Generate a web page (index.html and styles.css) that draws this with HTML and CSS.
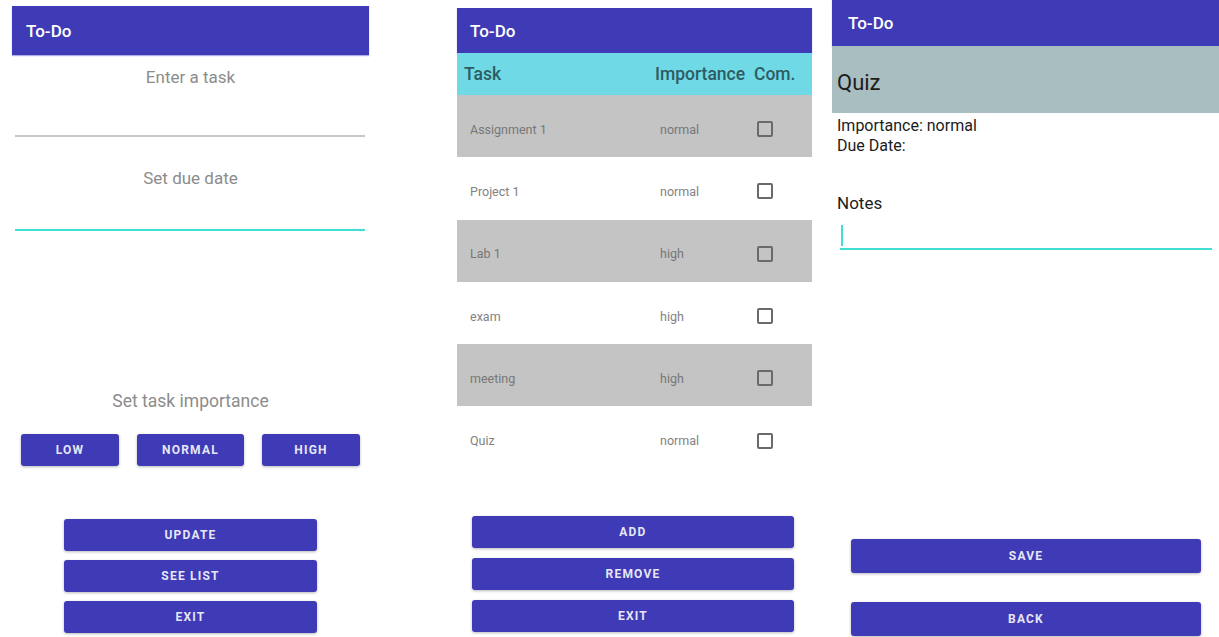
FILE: index.html
```html
<!DOCTYPE html>
<html>
<head>
<meta charset="utf-8">
<link rel="stylesheet" href="styles.css">
</head>
<body>
<div class="screens">
  <section class="screen s1">
    <header class="appbar">To-Do</header>
    <div class="field f-task"><span class="hint">Enter a task</span><div class="line grey"></div></div>
    <div class="field f-date"><span class="hint">Set due date</span><div class="line cyan"></div></div>
    <div class="imp-label">Set task importance</div>
    <div class="imp-row">
      <button class="btn b-low">LOW</button>
      <button class="btn b-normal">NORMAL</button>
      <button class="btn b-high">HIGH</button>
    </div>
    <div class="col-btns">
      <button class="btn wide">UPDATE</button>
      <button class="btn wide">SEE LIST</button>
      <button class="btn wide">EXIT</button>
    </div>
  </section>

  <section class="screen s2">
    <header class="appbar">To-Do</header>
    <div class="thead">
      <span class="c-task">Task</span>
      <span class="c-imp">Importance</span>
      <span class="c-com">Com.</span>
    </div>
    <div class="row alt"><span class="r-task">Assignment 1</span><span class="r-imp">normal</span><span class="cb"></span></div>
    <div class="row"><span class="r-task">Project 1</span><span class="r-imp">normal</span><span class="cb"></span></div>
    <div class="row alt"><span class="r-task">Lab 1</span><span class="r-imp">high</span><span class="cb"></span></div>
    <div class="row"><span class="r-task">exam</span><span class="r-imp">high</span><span class="cb"></span></div>
    <div class="row alt"><span class="r-task">meeting</span><span class="r-imp">high</span><span class="cb"></span></div>
    <div class="row"><span class="r-task">Quiz</span><span class="r-imp">normal</span><span class="cb"></span></div>
    <div class="col-btns2">
      <button class="btn wide2">ADD</button>
      <button class="btn wide2">REMOVE</button>
      <button class="btn wide2">EXIT</button>
    </div>
  </section>

  <section class="screen s3">
    <header class="appbar">To-Do</header>
    <div class="title-band">Quiz</div>
    <div class="info">Importance: normal<br>Due Date:</div>
    <div class="notes-label">Notes</div>
    <div class="notes-input"><span class="cursor"></span></div>
    <button class="btn wide3 save">SAVE</button>
    <button class="btn wide3 back">BACK</button>
  </section>
</div>
</body>
</html>
```
FILE: styles.css
```css
* { box-sizing: border-box; }
html, body { margin: 0; padding: 0; background: #fff; }
body {
  width: 1219px;
  height: 637px;
  overflow: hidden;
  font-family: Roboto, "Liberation Sans", Arial, sans-serif;
}
.screens { display: flex; align-items: flex-start; }
.screen { display: flex; flex-direction: column; }

.appbar {
  background: #3f3ab5;
  color: #fff;
  font-weight: 500;
  font-size: 17px;
  display: flex;
  align-items: center;
  box-shadow: 0 1px 1px rgba(110, 105, 210, 0.55);
}

.btn {
  border: none;
  background: #3f3ab5;
  color: #e6e6f6;
  font-family: Roboto, "Liberation Sans", Arial, sans-serif;
  font-weight: 700;
  font-size: 12px;
  letter-spacing: 1.2px;
  border-radius: 3px;
  box-shadow: 0 1px 3px rgba(0, 0, 0, 0.28);
  padding: 0;
  display: flex;
  align-items: center;
  justify-content: center;
}

/* Screen 1 */
.s1 { width: 357px; margin: 6px 0 0 12px; }
.s1 .appbar { height: 49px; padding-left: 14px; }
.field { display: flex; flex-direction: column; align-items: center; }
.hint { color: #8c8c8c; font-size: 17px; line-height: 20px; }
.f-task { margin-top: 12px; }
.f-task .hint { margin-bottom: 48px; }
.f-date { margin-top: 31px; }
.f-date .hint { margin-bottom: 41px; }
.line { width: 350px; height: 2px; align-self: flex-start; margin-left: 3px; }
.line.grey { background: #c8c8c8; }
.line.cyan { background: #3fe0d2; }
.imp-label {
  margin-top: 160px;
  text-align: center;
  color: #8c8c8c;
  font-size: 17.5px;
  line-height: 20px;
}
.imp-row { display: flex; gap: 18px; margin-top: 23px; padding-left: 9px; }
.imp-row .btn { height: 32px; }
.b-low, .b-high { width: 98px; }
.b-normal { width: 107px; }
.col-btns { display: flex; flex-direction: column; gap: 9px; margin-top: 53px; padding-left: 52px; }
.wide { width: 253px; height: 32px; }

/* Screen 2 */
.s2 { width: 355px; margin: 8px 0 0 88px; }
.s2 .appbar { height: 45px; padding-left: 13px; }
.thead {
  background: #6fdae6;
  height: 42px;
  display: flex;
  align-items: center;
  font-weight: 500;
  font-size: 17.5px;
  color: #2d5c62;
}
.c-task { margin-left: 7px; width: 191px; }
.c-imp { width: 99px; }
.row {
  height: 62.3px;
  display: flex;
  align-items: center;
  padding-top: 6px;
  font-size: 12.5px;
  color: #828282;
}
.row.alt { background: #c4c4c4; color: #777; }
.r-task { margin-left: 13px; width: 190px; }
.r-imp { width: 97px; }
.cb {
  width: 16px;
  height: 16px;
  border: 2px solid #6a6a6a;
  border-radius: 2px;
}
.col-btns2 { display: flex; flex-direction: column; gap: 10px; margin-top: 47px; padding-left: 15px; }
.wide2 { width: 322px; height: 32px; }

/* Screen 3 */
.s3 { width: 387px; margin: 0 0 0 20px; }
.s3 .appbar { height: 46px; padding-left: 16px; }
.title-band {
  background: #a9bec1;
  height: 67px;
  display: flex;
  align-items: center;
  padding: 5px 0 0 5px;
  font-size: 22px;
  color: #1c1c1c;
}
.info {
  margin-top: 3px;
  padding-left: 5px;
  font-size: 16px;
  line-height: 20px;
  color: #1c1c1c;
}
.notes-label {
  margin-top: 37px;
  padding-left: 5px;
  font-size: 17px;
  line-height: 20px;
  color: #1c1c1c;
}
.notes-input {
  margin: 10px 7px 0 8px;
  height: 27px;
  border-bottom: 2px solid #3fe0d2;
  display: flex;
  align-items: flex-end;
  padding-bottom: 2px;
}
.cursor { width: 2px; height: 21px; background: #3fe0d2; margin-left: 1px; }
.wide3 { width: 350px; height: 34px; margin-left: 19px; }
.save { margin-top: 289px; }
.back { margin-top: 29px; }
```
